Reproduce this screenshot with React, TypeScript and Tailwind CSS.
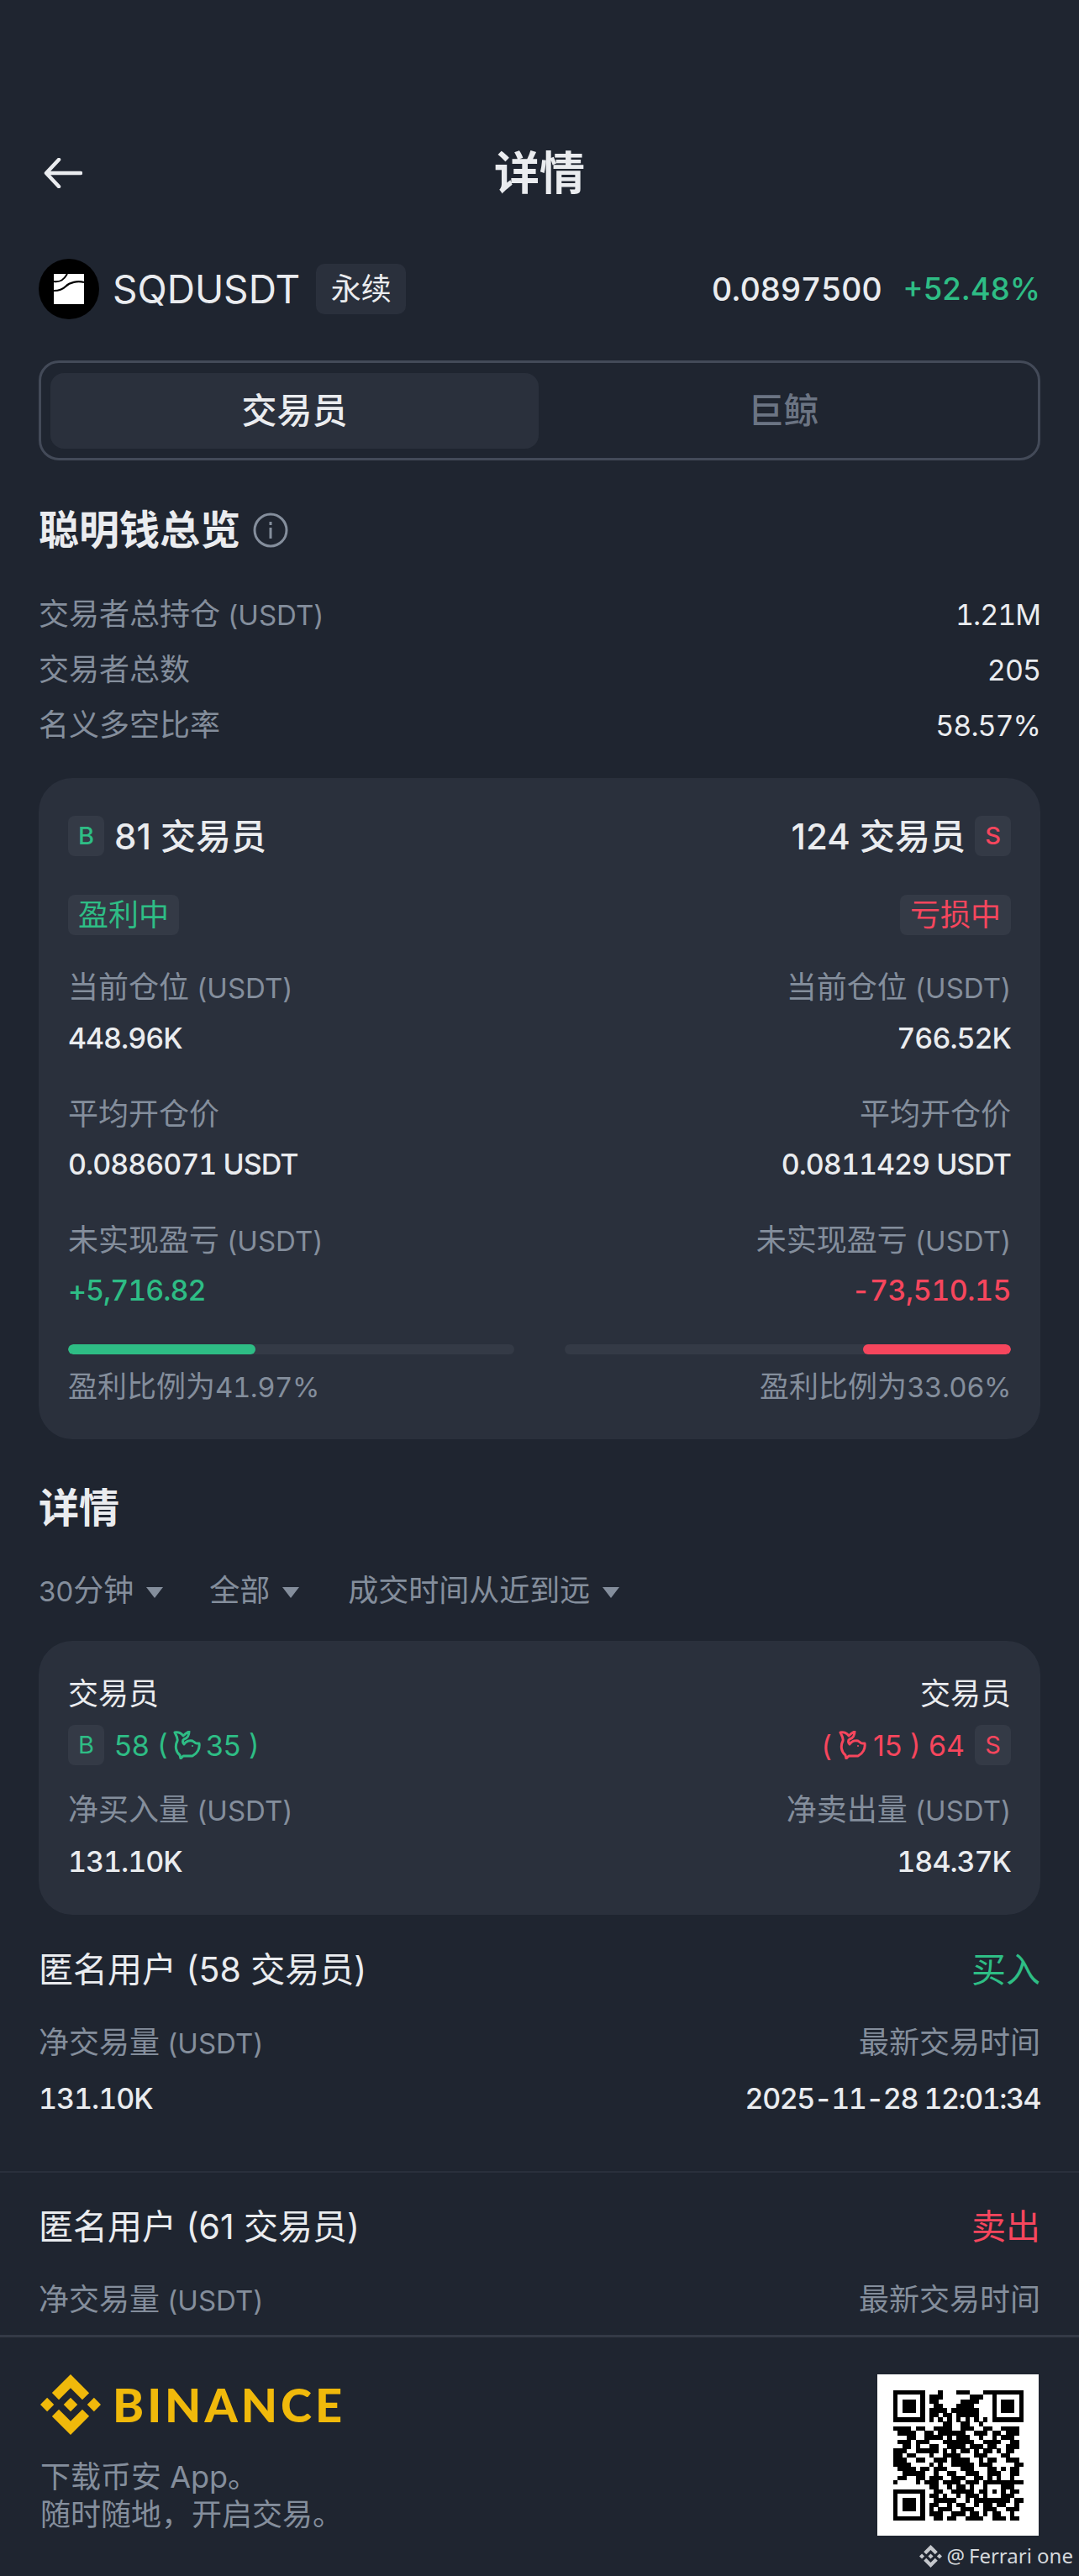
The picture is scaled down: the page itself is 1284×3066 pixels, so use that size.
const FONT = "[font-family:Inter,'Noto_Sans_CJK_SC',sans-serif]";

const QR_ROWS = [
  "00000000001000111000110000000",
  "00000000111000000111000000000",
  "00000000110000011110000000000",
  "00000000011000111100000000000",
  "00000000111101111110000000000",
  "00000000110110111110000000000",
  "00000000101010101010100000000",
  "00000000000110011001000000000",
  "11110110011110011100110011110",
  "01111001101111110011101101110",
  "00011001111010111001001011100",
  "01110111000111111100111100110",
  "00110100110011110111011001110",
  "11100111110101011010110101100",
  "11011000100111100011100011000",
  "11100110011101111001011001110",
  "11110000101001111101110000011",
  "01111011011100011100011010110",
  "00111110010011001110011100110",
  "01100110111001110011010100100",
  "10000101110111101110101011111",
  "00000000110010110100000001100",
  "00000000011001111101000010110",
  "00000000110100101110000011100",
  "00000000011111001011100111011",
  "00000000110010110010110110010",
  "00000000101110011100111001110",
  "00000000111001110110101100100",
  "00000000011011001111001110110",
];

function qrCell(r: number, c: number) {
  const finder = (y: number, x: number) => {
    const dy = r - y;
    const dx = c - x;
    if (dy < 0 || dy > 6 || dx < 0 || dx > 6) return null;
    if (dy === 0 || dy === 6 || dx === 0 || dx === 6) return true;
    if (dy === 1 || dy === 5 || dx === 1 || dx === 5) return false;
    return true;
  };
  const f = finder(0, 0) ?? finder(0, 22) ?? finder(22, 0);
  if (f !== null) return f;
  if (r >= 20 && r <= 24 && c >= 20 && c <= 24) {
    const d = Math.max(Math.abs(r - 22), Math.abs(c - 22));
    return d !== 1;
  }
  return QR_ROWS[r][c] === "1";
}

function QrCode() {
  const cells: { r: number; c: number }[] = [];
  for (let r = 0; r < 29; r++) {
    for (let c = 0; c < 29; c++) {
      if (qrCell(r, c)) cells.push({ r, c });
    }
  }
  return (
    <svg width="155" height="155" viewBox="0 0 29 29" shapeRendering="crispEdges">
      {cells.map(({ r, c }) => (
        <rect key={`${r}-${c}`} x={c} y={r} width="1.02" height="1.02" fill="#000" />
      ))}
    </svg>
  );
}

function BinanceMark({ size, color }: { size: number; color: string }) {
  return (
    <svg width={size} height={size} viewBox="0 0 126.61 126.61" fill={color}>
      <path d="M38.73 53.2 63.31 28.62 87.9 53.21 102.2 38.91 63.31 0 24.43 38.88z" />
      <path d="M0 63.31l14.3-14.3 14.3 14.3-14.3 14.3z" />
      <path d="M38.73 73.41 63.31 97.99 87.9 73.4 102.2 87.69 63.31 126.61 24.43 87.73z" />
      <path d="M98.01 63.31l14.3-14.3 14.3 14.3-14.3 14.3z" />
      <path d="M77.81 63.3 63.31 48.8 48.82 63.29l14.49 14.51z" />
    </svg>
  );
}

function WhaleIcon({ color }: { color: string }) {
  return (
    <svg width="33" height="34" viewBox="0 0 33 34" fill="none" stroke={color} strokeWidth="3" strokeLinejoin="round" strokeLinecap="round">
      <path d="M2 2C6 1 10 3 12 6 14 4 16 2 19 1 19 5 17 9 13 10 11 11 11 14 13 16 15 13 19 11 23 12 25 13 26 15 28 15L31 15C32 21 29 27 23 30L12 30 9 33 8 29C3 25 2 18 5 12 6 9 4 6 2 2Z" />
      <circle cx="23" cy="18" r="1" fill={color} stroke="none" />
    </svg>
  );
}

function Badge({ side }: { side: "B" | "S" }) {
  return (
    <span className={`flex h-[48px] w-[43px] items-center justify-center rounded-[8px] bg-[#343a46] text-[29px] ${side === "B" ? "text-[#2ebd85]" : "text-[#f6465d]"}`}>
      {side}
    </span>
  );
}

// the (USDT) part runs narrower than the Chinese next to it
function Label({ text }: { text: string }) {
  const [cjk, unit] = text.split(" (");
  return (
    <span>
      {cjk}
      {unit && <span className="text-[33px]"> ({unit}</span>}
    </span>
  );
}

function Stat({
  left,
  right,
  leftClass = "text-[#eaecef]",
  rightClass = "text-[#eaecef]",
  labelTop,
  valueTop,
  leftLabel,
  rightLabel,
}: {
  left: string;
  right: string;
  leftClass?: string;
  rightClass?: string;
  labelTop: string;
  valueTop: string;
  leftLabel: string;
  rightLabel: string;
}) {
  return (
    <div className={labelTop}>
      <div className="flex justify-between text-[36px] leading-[50px] text-[#848e9c]">
        <Label text={leftLabel} />
        <Label text={rightLabel} />
      </div>
      <div className={`flex justify-between text-[34px] font-medium leading-[50px] tracking-[-1px] tabular-nums ${valueTop}`}>
        <span className={leftClass}>{left}</span>
        <span className={rightClass}>{right}</span>
      </div>
    </div>
  );
}

function Caret() {
  return <span className="ml-[15px] mt-[4px] h-0 w-0 border-x-[10px] border-t-[13px] border-x-transparent border-t-[#848e9c]" />;
}

function OverviewRow({ label, value }: { label: string; value: string }) {
  return (
    <div className="flex h-[66px] items-center justify-between">
      <span className="text-[36px] text-[#848e9c]"><Label text={label} /></span>
      <span className="text-[34px] tracking-[-1px] tabular-nums text-[#eaecef]">{value}</span>
    </div>
  );
}

function TraderHead({ name, side, sideClass }: { name: string; side: string; sideClass: string }) {
  return (
    <div className="flex items-center justify-between text-[41px] leading-[54px]">
      <span className="text-[#eaecef]">{name}</span>
      <span className={sideClass}>{side}</span>
    </div>
  );
}

export default function App() {
  return (
    <div className={`flex h-[3066px] w-[1284px] flex-col overflow-hidden bg-[#1f2530] ${FONT}`}>
      <main className="min-h-0 flex-1 overflow-hidden px-[46px]">
        <header className="relative mt-[156px] flex h-[100px] items-center justify-center">
          <svg className="absolute left-[6px]" width="46" height="36" viewBox="0 0 46 36" fill="none" stroke="#eaecef" strokeWidth="4.5" strokeLinecap="round" strokeLinejoin="round">
            <path d="M44 18H4M18 2 3 18l15 16" />
          </svg>
          <h1 className="text-[54px] font-semibold text-[#eaecef]">详情</h1>
        </header>

        <div className="mt-[52px] flex h-[72px] items-center justify-between">
          <div className="flex items-center">
            <svg width="72" height="72" viewBox="0 0 72 72">
              <circle cx="36" cy="36" r="36" fill="#000" />
              <rect x="18" y="18" width="36" height="36" fill="#fff" />
              <path d="M18 27c8 1 12-2 16-9" fill="none" stroke="#000" strokeWidth="2" />
              <path d="M18 38c6 0 10-1 14-5 5-5 14-7 22-5" fill="none" stroke="#000" strokeWidth="2.2" />
            </svg>
            <span className="ml-[16px] text-[46px] text-[#eaecef]">SQDUSDT</span>
            <span className="ml-[19px] flex h-[60px] w-[107px] items-center justify-center rounded-[10px] bg-[#2a303c] text-[36px] text-[#eaecef]">永续</span>
          </div>
          <div className="flex items-center font-medium">
            <span className="text-[38px] tracking-[-0.5px] tabular-nums text-[#eaecef]">0.0897500</span>
            <span className="ml-[25px] text-[36.5px] text-[#2ebd85]">+52.48%</span>
          </div>
        </div>

        <div className="mt-[49px] flex h-[119px] items-center rounded-[24px] border-[3px] border-[#434a58] px-[11px]">
          <div className="flex h-[90px] w-[581px] items-center justify-center rounded-[16px] bg-[#2a303c] text-[42px] font-medium text-[#eaecef]">交易员</div>
          <div className="flex h-[90px] flex-1 items-center justify-center text-[42px] font-medium text-[#6b7483]">巨鲸</div>
        </div>

        <div className="mt-[53px] flex h-[60px] items-center">
          <h2 className="text-[48px] font-semibold text-[#eaecef]">聪明钱总览</h2>
          <svg className="ml-[15px]" width="42" height="42" viewBox="0 0 42 42" fill="none" stroke="#848e9c" strokeWidth="3">
            <circle cx="21" cy="21" r="19" />
            <path d="M21 18v13M21 11v4" />
          </svg>
        </div>

        <div className="mt-[37px]">
          <OverviewRow label="交易者总持仓 (USDT)" value="1.21M" />
          <OverviewRow label="交易者总数" value="205" />
          <OverviewRow label="名义多空比率" value="58.57%" />
        </div>

        <section className="mt-[30px] rounded-[40px] bg-[#2a303c] px-[35px] pb-[39px] pt-[45px]">
          <div className="flex h-[48px] items-center justify-between text-[42px] font-medium text-[#eaecef]">
            <div className="flex items-center gap-[12px]">
              <Badge side="B" />
              <span>81 交易员</span>
            </div>
            <div className="flex items-center gap-[11px]">
              <span>124 交易员</span>
              <Badge side="S" />
            </div>
          </div>

          <div className="mt-[46px] flex justify-between">
            <span className="flex h-[48px] items-center rounded-[8px] bg-[#343a46] px-[12px] text-[36px] text-[#2ebd85]">盈利中</span>
            <span className="flex h-[48px] items-center rounded-[8px] bg-[#343a46] px-[12px] text-[36px] text-[#f6465d]">亏损中</span>
          </div>

          <Stat labelTop="mt-[37px]" valueTop="mt-[10px]" leftLabel="当前仓位 (USDT)" rightLabel="当前仓位 (USDT)" left="448.96K" right="766.52K" />
          <Stat labelTop="mt-[40px]" valueTop="mt-[10px]" leftLabel="平均开仓价" rightLabel="平均开仓价" left="0.0886071 USDT" right="0.0811429 USDT" />
          <Stat
            labelTop="mt-[40px]"
            valueTop="mt-[9px]"
            leftLabel="未实现盈亏 (USDT)"
            rightLabel="未实现盈亏 (USDT)"
            left="+5,716.82"
            right="-73,510.15"
            leftClass="text-[#2ebd85]"
            rightClass="text-[#f6465d] tracking-[-0.5px]"
          />

          <div className="mt-[39px] flex justify-between">
            <div className="h-[12px] w-[531px] overflow-hidden rounded-full bg-[#343a46]">
              <div className="h-full w-[223px] rounded-full bg-[#2ebd85]" />
            </div>
            <div className="flex h-[12px] w-[531px] justify-end overflow-hidden rounded-full bg-[#343a46]">
              <div className="h-full w-[176px] rounded-full bg-[#f6465d]" />
            </div>
          </div>
          <div className="mt-[15px] flex justify-between text-[35px] leading-[46px] text-[#848e9c]">
            <span>盈利比例为<span className="text-[33px] tracking-[-0.5px] tabular-nums">41.97%</span></span>
            <span>盈利比例为<span className="text-[33px] tracking-[-0.5px] tabular-nums">33.06%</span></span>
          </div>
        </section>

        <h2 className="mt-[52px] text-[48px] font-semibold leading-[60px] text-[#eaecef]">详情</h2>

        <div className="mt-[43px] flex h-[50px] items-center text-[36px] text-[#848e9c]">
          <span><span className="text-[33px]">30</span>分钟</span>
          <Caret />
          <span className="ml-[55px]">全部</span>
          <Caret />
          <span className="ml-[58px]">成交时间从近到远</span>
          <Caret />
        </div>

        <section className="mt-[35px] rounded-[40px] bg-[#2a303c] px-[35px] pb-[38px] pt-[40px]">
          <div className="flex justify-between text-[36px] leading-[46px] text-[#eaecef]">
            <span>交易员</span>
            <span>交易员</span>
          </div>
          <div className="mt-[14px] flex h-[48px] items-center justify-between text-[34px]">
            <div className="flex items-center text-[#2ebd85]">
              <Badge side="B" />
              <span className="ml-[12px]">58 (</span>
              <span className="mx-[6px]"><WhaleIcon color="#2ebd85" /></span>
              <span>35 )</span>
            </div>
            <div className="flex items-center text-[#f6465d]">
              <span>(</span>
              <span className="mx-[8px]"><WhaleIcon color="#f6465d" /></span>
              <span>15 ) 64</span>
              <span className="ml-[12px]"><Badge side="S" /></span>
            </div>
          </div>
          <Stat labelTop="mt-[28px]" valueTop="mt-[11px]" leftLabel="净买入量 (USDT)" rightLabel="净卖出量 (USDT)" left="131.10K" right="184.37K" />
        </section>

        <div className="mt-[38px]">
          <TraderHead name="匿名用户 (58 交易员)" side="买入" sideClass="text-[#2ebd85]" />
          <div className="mt-[35px] flex justify-between text-[36px] leading-[50px] text-[#848e9c]">
            <Label text="净交易量 (USDT)" />
            <span>最新交易时间</span>
          </div>
          <div className="mt-[16px] flex justify-between text-[34px] font-medium leading-[50px] tabular-nums text-[#eaecef]">
            <span className="tracking-[-1px]">131.10K</span>
            <span className="tracking-[-1.5px]">2025-11-28 12:01:34</span>
          </div>
        </div>

        <div className="-mx-[46px] mt-[61px] h-[2px] bg-[#2a303c]" />

        <div className="mt-[37px]">
          <TraderHead name="匿名用户 (61 交易员)" side="卖出" sideClass="text-[#f6465d]" />
          <div className="mt-[35px] flex justify-between text-[36px] leading-[50px] text-[#848e9c]">
            <Label text="净交易量 (USDT)" />
            <span>最新交易时间</span>
          </div>
        </div>
      </main>

      <footer className="relative flex h-[287px] shrink-0 justify-between border-t-[3px] border-[#343a46] px-[48px] pt-[44px]">
        <div>
          <div className="flex items-center">
            <BinanceMark size={72} color="#f0b90b" />
            <span className="ml-[14px] font-['Lato'] text-[56px] font-black leading-[72px] tracking-[4px] text-[#f0b90b]">BINANCE</span>
          </div>
          <p className="mt-[28px] text-[36px] leading-[45px] text-[#848e9c]">下载币安 App。</p>
          <p className="text-[36px] leading-[45px] text-[#848e9c]">随时随地，开启交易。</p>
        </div>
        <div className="flex h-[192px] w-[192px] items-center justify-center bg-white">
          <QrCode />
        </div>
        <div className="absolute bottom-[10px] right-[7px] flex items-center font-['Noto_Sans'] text-[24px] leading-[28px] text-[#d5d8dc]">
          <BinanceMark size={27} color="#c4c7cc" />
          <span className="ml-[5px]">@</span>
          <span className="ml-[5px]">Ferrari one</span>
        </div>
      </footer>
    </div>
  );
}
